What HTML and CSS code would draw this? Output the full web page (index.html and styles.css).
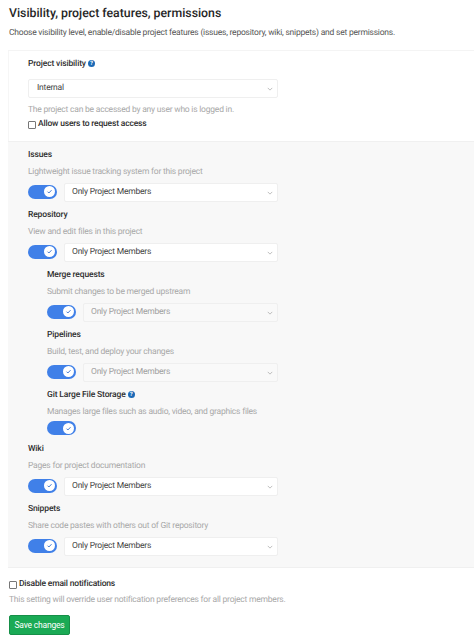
FILE: index.html
```html
<!DOCTYPE html>
<html lang="en">
<head>
    <meta charset="UTF-8">
    <meta name="viewport" content="width=device-width, initial-scale=1.0">
    <title>Visibility, project features, permissions</title>
    <link rel="stylesheet" href="styles.css">
</head>
<body>
    <h2>Visibility, project features, permissions</h2>
    <p class="lead">Choose visibility level, enable/disable project features (issues, repository, wiki, snippets) and set permissions.</p>

    <div class="panel">
        <div class="visibility">
            <div class="label">Project visibility <span class="help">?</span></div>
            <div class="select wide">Internal<svg class="chevron" viewBox="0 0 8 5"><path d="M1 1l3 3 3-3"/></svg></div>
            <div class="hint">The project can be accessed by any user who is logged in.</div>
            <div class="check"><span class="box"></span>Allow users to request access</div>
        </div>

        <div class="features">
            <div class="feature">
                <div class="label">Issues</div>
                <div class="hint">Lightweight issue tracking system for this project</div>
                <div class="control">
                    <span class="toggle"><span class="knob"><svg viewBox="0 0 8 8"><path d="M1.8 4.2l1.5 1.5 3-3.2"/></svg></span></span>
                    <div class="select">Only Project Members<svg class="chevron" viewBox="0 0 8 5"><path d="M1 1l3 3 3-3"/></svg></div>
                </div>
            </div>
            <div class="feature">
                <div class="label">Repository</div>
                <div class="hint">View and edit files in this project</div>
                <div class="control">
                    <span class="toggle"><span class="knob"><svg viewBox="0 0 8 8"><path d="M1.8 4.2l1.5 1.5 3-3.2"/></svg></span></span>
                    <div class="select">Only Project Members<svg class="chevron" viewBox="0 0 8 5"><path d="M1 1l3 3 3-3"/></svg></div>
                </div>
            </div>
            <div class="feature sub">
                <div class="label">Merge requests</div>
                <div class="hint">Submit changes to be merged upstream</div>
                <div class="control">
                    <span class="toggle"><span class="knob"><svg viewBox="0 0 8 8"><path d="M1.8 4.2l1.5 1.5 3-3.2"/></svg></span></span>
                    <div class="select disabled">Only Project Members<svg class="chevron" viewBox="0 0 8 5"><path d="M1 1l3 3 3-3"/></svg></div>
                </div>
            </div>
            <div class="feature sub">
                <div class="label">Pipelines</div>
                <div class="hint">Build, test, and deploy your changes</div>
                <div class="control">
                    <span class="toggle"><span class="knob"><svg viewBox="0 0 8 8"><path d="M1.8 4.2l1.5 1.5 3-3.2"/></svg></span></span>
                    <div class="select disabled">Only Project Members<svg class="chevron" viewBox="0 0 8 5"><path d="M1 1l3 3 3-3"/></svg></div>
                </div>
            </div>
            <div class="feature sub lfs">
                <div class="label">Git Large File Storage <span class="help">?</span></div>
                <div class="hint">Manages large files such as audio, video, and graphics files</div>
                <div class="control">
                    <span class="toggle"><span class="knob"><svg viewBox="0 0 8 8"><path d="M1.8 4.2l1.5 1.5 3-3.2"/></svg></span></span>
                </div>
            </div>
            <div class="feature">
                <div class="label">Wiki</div>
                <div class="hint">Pages for project documentation</div>
                <div class="control">
                    <span class="toggle"><span class="knob"><svg viewBox="0 0 8 8"><path d="M1.8 4.2l1.5 1.5 3-3.2"/></svg></span></span>
                    <div class="select">Only Project Members<svg class="chevron" viewBox="0 0 8 5"><path d="M1 1l3 3 3-3"/></svg></div>
                </div>
            </div>
            <div class="feature">
                <div class="label">Snippets</div>
                <div class="hint">Share code pastes with others out of Git repository</div>
                <div class="control">
                    <span class="toggle"><span class="knob"><svg viewBox="0 0 8 8"><path d="M1.8 4.2l1.5 1.5 3-3.2"/></svg></span></span>
                    <div class="select">Only Project Members<svg class="chevron" viewBox="0 0 8 5"><path d="M1 1l3 3 3-3"/></svg></div>
                </div>
            </div>
        </div>
    </div>

    <div class="footer">
        <div class="check"><span class="box"></span>Disable email notifications</div>
        <div class="hint">This setting will override user notification preferences for all project members.</div>
        <button class="save">Save changes</button>
    </div>
</body>
</html>
```

FILE: styles.css
```css
body {
    margin: 0;
    padding: 0 0 0 9px;
    height: 642px;
    box-sizing: border-box;
    overflow: hidden;
    background-color: #fff;
    color: #2e2e2e;
    font-family: Roboto, "Noto Sans", sans-serif;
    font-size: 8.5px;
    letter-spacing: -0.22px;
    line-height: 17px;
    text-rendering: geometricPrecision;
}
h2 {
    margin: 0;
    padding-top: 5px;
    font-size: 12.3px;
    font-weight: 500;
    letter-spacing: 0;
    line-height: 18px;
    color: #262626;
}
.lead {
    margin: 2px 0 0;
    height: 25px;
    color: #555;
}
.panel {
    margin-left: -1px;
    border-top: 1px solid #f4f4f4;
}
.visibility {
    height: 90px;
    padding: 5px 0 0 19px;
    box-sizing: border-box;
    border-left: 1px solid #f6f6f6;
}
.label {
    font-weight: 500;
    letter-spacing: -0.14px;
    color: #2e2e2e;
}
.hint {
    color: #a8a8a8;
}
.help {
    display: inline-block;
    width: 7px;
    height: 7px;
    border-radius: 50%;
    background-color: #1b69b6;
    color: #fff;
    font-size: 6px;
    font-weight: 700;
    line-height: 7px;
    text-align: center;
    vertical-align: 1px;
}
.select {
    display: flex;
    flex: 1;
    align-items: center;
    justify-content: space-between;
    height: 19px;
    padding: 0 4px 0 7px;
    box-sizing: border-box;
    background-color: #fff;
    border: 1px solid #efefef;
    border-radius: 2px;
    color: #444;
}
.select.wide {
    width: 250px;
    margin: 6px 0 4px;
    padding-left: 8px;
}
.select.disabled {
    background-color: #f9f9f9;
    color: #a0a0a0;
}
.chevron {
    width: 6px;
    height: 4px;
    fill: none;
    stroke: #aaa;
    stroke-width: 1;
}
.check {
    display: flex;
    align-items: center;
    gap: 2px;
    height: 11px;
    font-weight: 500;
    letter-spacing: -0.18px;
}
.box {
    width: 8px;
    height: 8px;
    box-sizing: border-box;
    background-color: #fff;
    border: 1px solid #777;
    border-radius: 1px;
}
.features {
    height: 427px;
    padding: 5px 0 0 20px;
    box-sizing: border-box;
    background-color: #f8f8f8;
    border-top: 1px solid #f0f0f0;
    border-bottom: 1px solid #f0f0f0;
}
.feature {
    height: 60px;
    width: 250px;
}
.feature.sub {
    padding-left: 19px;
    box-sizing: border-box;
}
.feature.lfs {
    height: 54px;
}
.control {
    display: flex;
    align-items: center;
    gap: 7px;
    margin-top: 2px;
}
.toggle {
    display: flex;
    flex: none;
    align-items: center;
    justify-content: flex-end;
    width: 29px;
    height: 14px;
    padding-right: 2px;
    box-sizing: border-box;
    background-color: #4080e8;
    border-radius: 7px;
    margin-top: -2px;
}
.knob {
    display: flex;
    align-items: center;
    justify-content: center;
    width: 11px;
    height: 11px;
    background-color: #fff;
    border-radius: 50%;
}
.knob svg {
    width: 7px;
    height: 7px;
    fill: none;
    stroke: #3b75d0;
    stroke-width: 1.1;
}
.footer {
    padding-top: 11px;
}
.footer .hint {
    margin-top: 2px;
}
.save {
    display: block;
    width: 61px;
    height: 20px;
    margin-top: 6px;
    padding: 0;
    background-color: #1aaa55;
    border: 1px solid #168f48;
    border-radius: 2px;
    color: #fff;
    font-family: inherit;
    font-size: 8.5px;
    letter-spacing: -0.2px;
}
```
